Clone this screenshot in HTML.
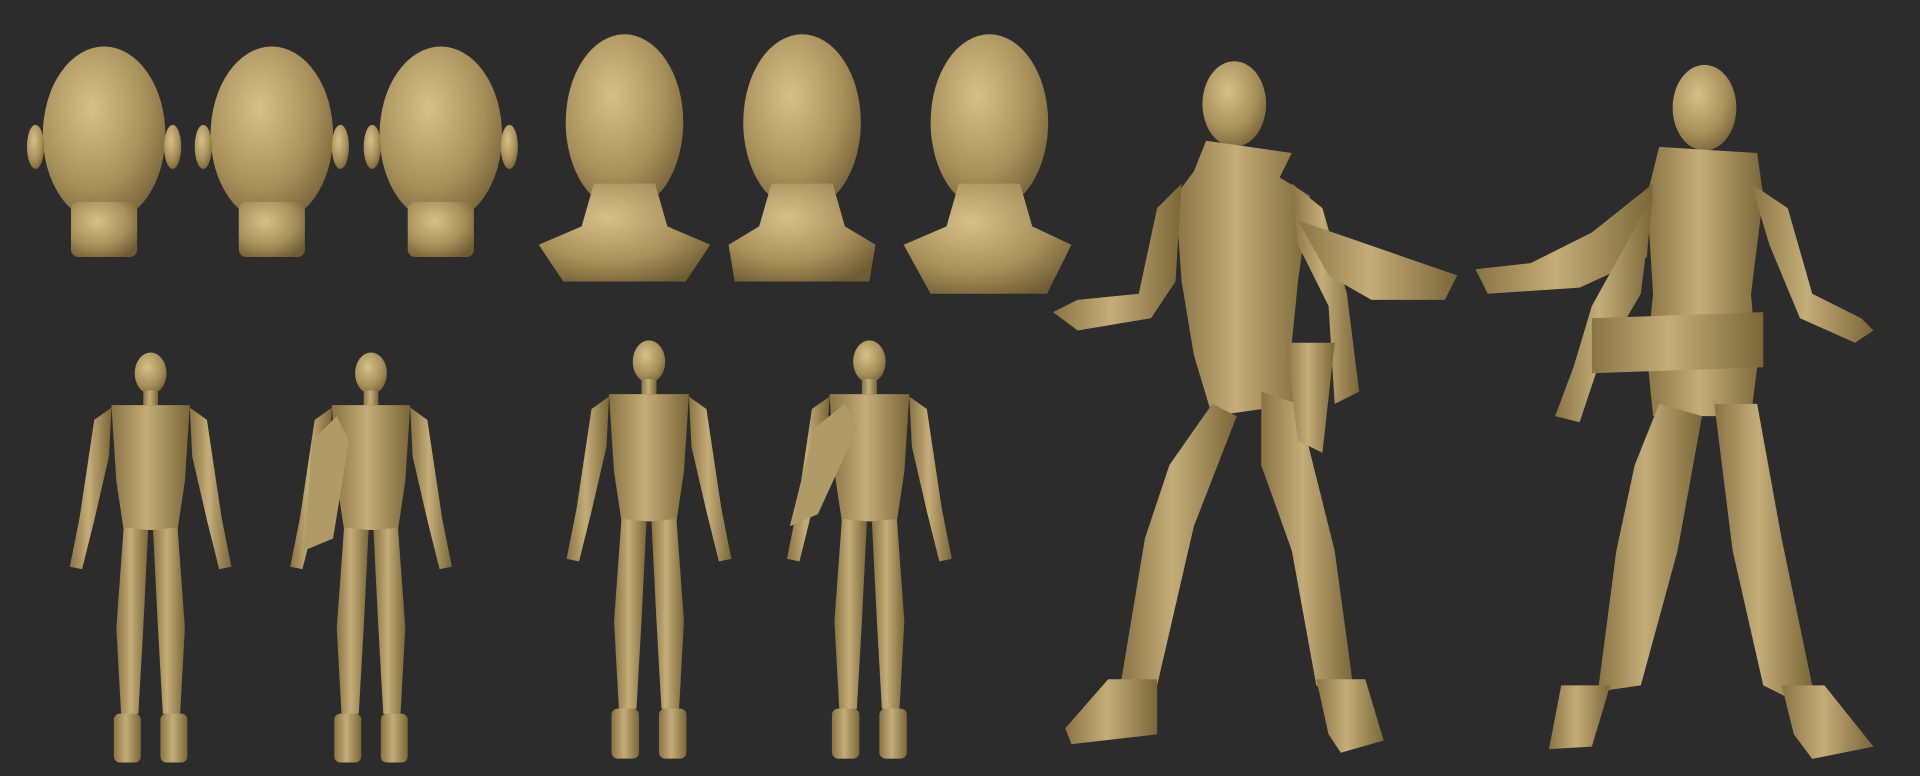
<!DOCTYPE html>
<html><head><meta charset="utf-8"><style>
html,body{margin:0;padding:0;background:#2c2c2c;width:1920px;height:776px;overflow:hidden}
svg{display:block}
</style></head><body>
<svg width="1920" height="776" viewBox="0 0 1568 634" preserveAspectRatio="none" xmlns="http://www.w3.org/2000/svg">
<defs>
<radialGradient id="g" cx="0.4" cy="0.35" r="0.75">
<stop offset="0" stop-color="#d6c08a"/><stop offset="0.6" stop-color="#a8905a"/><stop offset="1" stop-color="#6e5c34"/>
</radialGradient>
<linearGradient id="l" x1="0" y1="0" x2="1" y2="0">
<stop offset="0" stop-color="#8a7444"/><stop offset="0.45" stop-color="#c4ad78"/><stop offset="1" stop-color="#7a6638"/>
</linearGradient>
<g id="fig" fill="url(#l)">
<ellipse cx="0" cy="22" rx="13" ry="17" fill="url(#g)"/>
<rect x="-6" y="36" width="12" height="12"/>
<path d="M-32 48 L32 48 L28 110 L22 150 L-22 150 L-28 110 Z"/>
<path d="M-32 50 L-46 60 L-58 140 L-66 180 L-56 182 L-46 142 L-34 90 Z"/>
<path d="M32 50 L46 60 L58 140 L66 180 L56 182 L46 142 L34 90 Z"/>
<path d="M-22 148 L-2 150 L-6 230 L-10 300 L-24 302 L-28 230 Z"/>
<path d="M22 148 L2 150 L6 230 L10 300 L24 302 L28 230 Z"/>
<rect x="-30" y="300" width="22" height="40" rx="5"/>
<rect x="8" y="300" width="22" height="40" rx="5"/>
</g>
</defs>
<rect width="1568" height="634" fill="#2c2c2c"/>
<!-- bald heads -->
<g fill="url(#g)">
<ellipse cx="85" cy="110" rx="50" ry="72"/><rect x="58" y="165" width="54" height="45" rx="6"/>
<ellipse cx="29" cy="120" rx="7" ry="18"/><ellipse cx="141" cy="120" rx="7" ry="18"/>
<ellipse cx="222" cy="110" rx="50" ry="72"/><rect x="195" y="165" width="54" height="45" rx="6"/>
<ellipse cx="166" cy="120" rx="7" ry="18"/><ellipse cx="278" cy="120" rx="7" ry="18"/>
<ellipse cx="360" cy="110" rx="50" ry="72"/><rect x="333" y="165" width="54" height="45" rx="6"/>
<ellipse cx="304" cy="120" rx="7" ry="18"/><ellipse cx="416" cy="120" rx="7" ry="18"/>
</g>
<!-- busts -->
<g fill="url(#g)">
<ellipse cx="510" cy="100" rx="48" ry="72"/><path d="M485 150 L535 150 L545 185 L580 200 L560 230 L460 230 L440 200 L475 185 Z"/>
<ellipse cx="655" cy="100" rx="48" ry="72"/><path d="M630 150 L680 150 L690 185 L715 200 L710 230 L600 230 L595 200 L620 185 Z"/>
<ellipse cx="808" cy="100" rx="48" ry="72"/><path d="M783 150 L833 150 L843 185 L875 200 L855 240 L760 240 L738 200 L773 185 Z"/>
</g>
<!-- small figures -->
<use href="#fig" transform="translate(123,283)"/>
<use href="#fig" transform="translate(303,283)"/>
<use href="#fig" transform="translate(530,273) scale(1.02)"/>
<use href="#fig" transform="translate(710,273) scale(1.02)"/>
<path d="M275 340 L255 360 L248 450 L272 440 L285 360 Z" fill="#b09a66"/>
<path d="M690 330 L665 350 L645 430 L668 420 L700 350 Z" fill="#b09a66"/>
<!-- big figure 1 -->
<g fill="url(#l)">
<ellipse cx="1008" cy="85" rx="26" ry="35" fill="url(#g)"/>
<path d="M985 115 L1055 125 L1045 145 L1070 160 L1060 230 L1055 280 L1060 330 L990 340 L975 290 L965 230 L960 160 L975 140 Z"/>
<path d="M965 150 L945 170 L930 240 L880 245 L860 255 L880 270 L940 260 L960 230 Z"/>
<path d="M1055 150 L1080 170 L1100 240 L1110 320 L1090 330 L1085 250 L1060 200 Z"/>
<path d="M1060 180 L1190 225 L1180 245 L1120 245 L1085 225 Z"/>
<path d="M990 330 L1010 340 L975 430 L945 560 L930 570 L915 560 L935 440 L955 380 Z"/>
<path d="M1030 320 L1060 330 L1090 450 L1105 560 L1090 570 L1075 560 L1055 450 L1030 380 Z"/>
<path d="M905 555 L945 555 L945 600 L875 608 L870 595 Z"/>
<path d="M1075 555 L1115 555 L1130 605 L1095 615 L1085 600 Z"/>
<path d="M1050 280 L1090 280 L1080 370 L1060 360 Z"/>
</g>
<!-- big figure 2 -->
<g fill="url(#l)">
<ellipse cx="1392" cy="88" rx="26" ry="35" fill="url(#g)"/>
<path d="M1355 120 L1435 125 L1440 160 L1430 240 L1435 300 L1430 340 L1350 340 L1345 290 L1350 240 L1345 160 Z"/>
<path d="M1350 150 L1300 190 L1250 215 L1205 220 L1215 240 L1290 235 L1345 210 Z"/>
<path d="M1350 160 L1300 250 L1285 300 L1270 340 L1290 345 L1305 300 L1340 240 Z"/>
<path d="M1430 150 L1460 170 L1480 240 L1520 260 L1530 270 L1515 280 L1470 260 L1445 200 Z"/>
<path d="M1300 260 L1440 255 L1440 300 L1300 305 Z"/>
<path d="M1355 330 L1390 340 L1370 450 L1340 560 L1305 565 L1320 450 L1335 380 Z"/>
<path d="M1400 330 L1435 330 L1455 440 L1480 560 L1460 570 L1440 560 L1415 450 Z"/>
<path d="M1275 560 L1315 560 L1300 610 L1265 612 Z"/>
<path d="M1455 560 L1490 560 L1530 610 L1480 620 L1465 600 Z"/>
</g>
</svg>
</body></html>
